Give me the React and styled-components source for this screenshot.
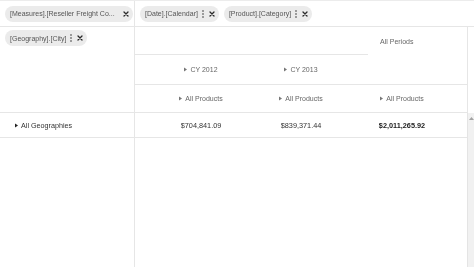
import React from "react";
import styled, { createGlobalStyle } from "styled-components";

const Global = createGlobalStyle`
  html, body { margin: 0; padding: 0; background: #fff; }
  body { font-family: "Liberation Sans", Arial, sans-serif; -webkit-font-smoothing: antialiased; }
  * { box-sizing: border-box; }
`;

const Root = styled.div`
  width: 474px;
  height: 267px;
  overflow: hidden;
  display: grid;
  grid-template-rows: 26px 1fr;
  border-top: 1px solid #ececec;
  font-family: "Liberation Sans", Arial, sans-serif;
  font-size: 7px;
  color: #333;
  background: #fff;
  filter: grayscale(1);
`;

const TopBar = styled.div`
  display: grid;
  grid-template-columns: 135px 1fr;
  border-bottom: 1px solid #e6e6e6;
`;

const AxisCell = styled.div`
  display: flex;
  align-items: center;
  gap: 5px;
  padding-left: ${(p) => p.$pad}px;
  border-right: ${(p) => (p.$divider ? "1px solid #e6e6e6" : "none")};
`;

const Chip = styled.div`
  display: inline-flex;
  align-items: center;
  height: 16px;
  padding: 0 4px 0 5px;
  border-radius: 8px;
  background: #ebebeb;
  color: #555;
  white-space: nowrap;
  font-size: 7px;
`;

const ChipText = styled.span`
  margin-right: ${(p) => p.$gap}px;
`;

const IconBox = styled.span`
  display: inline-flex;
  align-items: center;
  margin-right: ${(p) => p.$gap || 0}px;
`;

const Body = styled.div`
  display: grid;
  grid-template-columns: 135px 1fr;
  min-height: 0;
`;

const LeftPane = styled.div`
  border-right: 1px solid #e6e6e6;
  display: flex;
  flex-direction: column;
`;

const RowAxis = styled.div`
  height: 86px;
  padding: 3px 0 0 5px;
  border-bottom: 1px solid #e6e6e6;
`;

const RowHeaderCell = styled.div`
  height: 25px;
  display: flex;
  align-items: center;
  gap: 3px;
  padding-left: 15px;
  border-bottom: 1px solid #e6e6e6;
  color: #333;
  font-size: 7.2px;
`;

const RightPane = styled.div`
  display: flex;
  flex-direction: column;
  min-height: 0;
`;

const Header = styled.div`
  width: 333px;
  height: 86px;
  border-right: 1px solid #e6e6e6;
  display: flex;
  flex-direction: column;
`;

const HeaderTopRow = styled.div`
  height: 28px;
  display: flex;
`;

const GroupCell = styled.div`
  width: 233px;
  border-bottom: 1px solid #e6e6e6;
`;

const PeriodCell = styled.div`
  flex: 1;
  display: flex;
  align-items: center;
  padding-left: 12px;
  color: #666;
  font-size: 7px;
`;

const Row = styled.div`
  height: ${(p) => p.$h}px;
  display: grid;
  grid-template-columns: 100px 100px 102px;
  padding-left: 16px;
  border-bottom: 1px solid #e6e6e6;
`;

const HeadCell = styled.div`
  display: flex;
  align-items: center;
  justify-content: center;
  gap: 3px;
  color: #666;
  font-size: 7px;
`;

const DataWrap = styled.div`
  flex: 1;
  display: flex;
  min-height: 0;
`;

const DataArea = styled.div`
  width: 332px;
`;

const ValueCell = styled.div`
  display: flex;
  align-items: center;
  justify-content: center;
  color: ${(p) => (p.$total ? "#222" : "#333")};
  font-weight: ${(p) => (p.$total ? 700 : 400)};
  font-size: 7.3px;
`;

const Scrollbar = styled.div`
  flex: 1;
  background: #f1f1f1;
  border-left: 1px solid #e4e4e4;
  display: flex;
  justify-content: center;
  padding-top: 4px;
`;

const Kebab = () => (
  <svg width="2" height="8" viewBox="0 0 2 8">
    <circle cx="1" cy="1" r="0.8" fill="#333" />
    <circle cx="1" cy="4" r="0.8" fill="#333" />
    <circle cx="1" cy="7" r="0.8" fill="#333" />
  </svg>
);

const Close = () => (
  <svg width="6" height="6" viewBox="0 0 6 6">
    <path d="M1 1 L5 5 M5 1 L1 5" stroke="#2a2a2a" strokeWidth="1.3" strokeLinecap="round" />
  </svg>
);

const Arrow = ({ color = "#777" }) => (
  <svg width="3" height="5" viewBox="0 0 3 5">
    <polygon points="0,0.5 3,2.5 0,4.5" fill={color} />
  </svg>
);

const UpArrow = () => (
  <svg width="5" height="3" viewBox="0 0 5 3">
    <polygon points="0,3 2.5,0 5,3" fill="#a3a3a3" />
  </svg>
);

const Pill = ({ label, menu }) => (
  <Chip>
    <ChipText $gap={menu ? 4 : 8}>{label}</ChipText>
    {menu && (
      <IconBox $gap={5}>
        <Kebab />
      </IconBox>
    )}
    <IconBox>
      <Close />
    </IconBox>
  </Chip>
);

const values = [
  { v: "$704,841.09" },
  { v: "$839,371.44" },
  { v: "$2,011,265.92", total: true },
];

export default function App() {
  return (
    <>
      <Global />
      <Root>
        <TopBar>
          <AxisCell $pad={5} $divider>
            <Pill label="[Measures].[Reseller Freight Co..." />
          </AxisCell>
          <AxisCell $pad={5}>
            <Pill label="[Date].[Calendar]" menu />
            <Pill label="[Product].[Category]" menu />
          </AxisCell>
        </TopBar>
        <Body>
          <LeftPane>
            <RowAxis>
              <Pill label="[Geography].[City]" menu />
            </RowAxis>
            <RowHeaderCell>
              <Arrow color="#222" />
              All Geographies
            </RowHeaderCell>
          </LeftPane>
          <RightPane>
            <Header>
              <HeaderTopRow>
                <GroupCell />
                <PeriodCell>All Periods</PeriodCell>
              </HeaderTopRow>
              <Row $h={30}>
                <HeadCell>
                  <Arrow />
                  CY 2012
                </HeadCell>
                <HeadCell>
                  <Arrow />
                  CY 2013
                </HeadCell>
                <HeadCell />
              </Row>
              <Row $h={28}>
                {[0, 1, 2].map((i) => (
                  <HeadCell key={i}>
                    <Arrow />
                    All Products
                  </HeadCell>
                ))}
              </Row>
            </Header>
            <DataWrap>
              <DataArea>
                <Row $h={25}>
                  {values.map((d) => (
                    <ValueCell key={d.v} $total={d.total}>
                      {d.v}
                    </ValueCell>
                  ))}
                </Row>
              </DataArea>
              <Scrollbar>
                <UpArrow />
              </Scrollbar>
            </DataWrap>
          </RightPane>
        </Body>
      </Root>
    </>
  );
}
